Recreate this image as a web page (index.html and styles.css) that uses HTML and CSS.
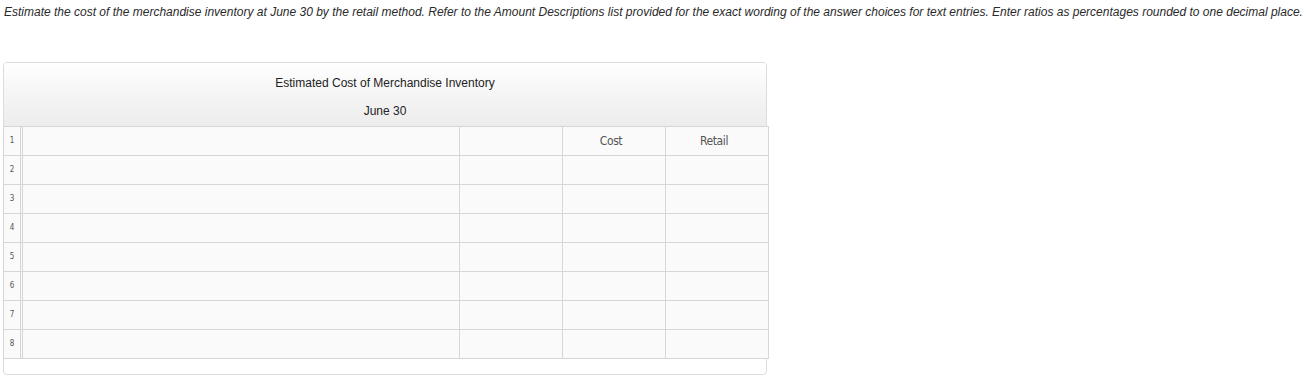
FILE: index.html
```html
<!DOCTYPE html>
<html>
<head>
<meta charset="utf-8">
<link rel="stylesheet" href="styles.css">
</head>
<body>
<p class="instr">Estimate the cost of the merchandise inventory at June 30 by the retail method. Refer to the Amount Descriptions list provided for the exact wording of the answer choices for text entries. Enter ratios as percentages rounded to one decimal place.</p>
<div class="frame">
  <div class="head">
    <div class="head-line">Estimated Cost of Merchandise Inventory</div>
    <div class="head-line">June 30</div>
  </div>
  <div class="grid">
    <div class="row"><div class="num">1</div><div class="cell"></div><div class="cell"></div><div class="cell colh">Cost</div><div class="cell colh">Retail</div></div>
    <div class="row"><div class="num">2</div><div class="cell"></div><div class="cell"></div><div class="cell"></div><div class="cell"></div></div>
    <div class="row"><div class="num">3</div><div class="cell"></div><div class="cell"></div><div class="cell"></div><div class="cell"></div></div>
    <div class="row"><div class="num">4</div><div class="cell"></div><div class="cell"></div><div class="cell"></div><div class="cell"></div></div>
    <div class="row"><div class="num">5</div><div class="cell"></div><div class="cell"></div><div class="cell"></div><div class="cell"></div></div>
    <div class="row"><div class="num">6</div><div class="cell"></div><div class="cell"></div><div class="cell"></div><div class="cell"></div></div>
    <div class="row"><div class="num">7</div><div class="cell"></div><div class="cell"></div><div class="cell"></div><div class="cell"></div></div>
    <div class="row"><div class="num">8</div><div class="cell"></div><div class="cell"></div><div class="cell"></div><div class="cell"></div></div>
  </div>
</div>
</body>
</html>
```
FILE: styles.css
```css
* { box-sizing: border-box; }
body {
  margin: 0;
  background: #fff;
  font-family: "Liberation Sans", Arial, sans-serif;
}
.instr {
  margin: 0;
  padding: 5px 0 0 4px;
  height: 62px;
  font-size: 12px;
  line-height: 14px;
  font-style: italic;
  color: #2a2a2a;
  white-space: nowrap;
}
.frame {
  margin-left: 3px;
  width: 764px;
  height: 313px;
  border: 1px solid #dcdcdc;
  border-radius: 4px;
  background: #fff;
}
.head {
  height: 63px;
  padding-top: 6px;
  background: linear-gradient(to bottom, #ffffff 0%, #f6f6f6 45%, #ececec 100%);
  border-radius: 3px 3px 0 0;
  text-align: center;
  font-size: 12px;
  color: #222;
}
.head-line {
  line-height: 28px;
}
.grid {
  margin-left: -1px;
  width: 766px;
  border-top: 1px solid #d6d6d6;
  border-left: 1px solid #d6d6d6;
}
.row {
  display: grid;
  grid-template-columns: 19px 437px 103px 103px 103px;
  height: 29px;
}
.num, .cell {
  height: 29px;
  background: #fafafa;
  border-bottom: 1px solid #d6d6d6;
  border-right: 1px solid #d6d6d6;
  overflow: hidden;
}
.num {
  border-right: 3px double #d6d6d6;
  font-family: "DejaVu Sans Condensed", sans-serif;
  font-size: 8px;
  color: #555;
  text-align: center;
  line-height: 28px;
}
.colh {
  font-family: "DejaVu Sans Condensed", sans-serif;
  font-size: 12px;
  color: #555;
  text-align: center;
  line-height: 29px;
  padding-right: 6px;
  letter-spacing: -0.4px;
}
```
